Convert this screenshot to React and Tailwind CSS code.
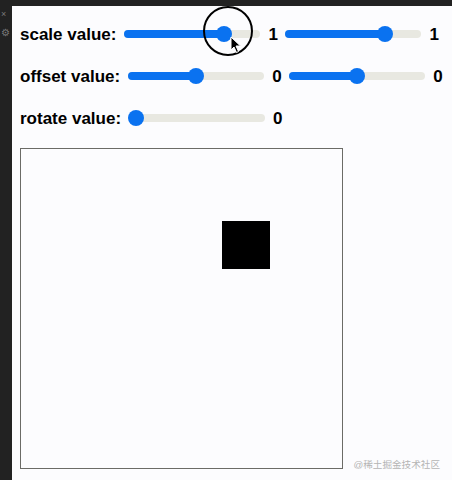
import React from 'react';

const font = { fontFamily: '"Liberation Sans", Arial, sans-serif' };

function Slider({ pct }) {
  return (
    <div className="relative w-[136px] h-[8px] rounded-full bg-[#e8e8e1] shrink-0">
      <div className="h-full rounded-full bg-[#0a72f0]" style={{ width: `${pct}%` }} />
      <div
        className="absolute top-1/2 w-4 h-4 -mt-2 -ml-2 rounded-full bg-[#0a72f0]"
        style={{ left: `${pct}%` }}
      />
    </div>
  );
}

function Row({ label, values }) {
  return (
    <div className="flex items-center h-[42px] gap-2 text-[17px] font-bold text-black">
      <span className="pt-[2px]">{label}</span>
      {values.map((v, i) => (
        <React.Fragment key={i}>
          <Slider pct={v.pct} />
          <span className="w-[9px] pt-[2px]">{v.text}</span>
        </React.Fragment>
      ))}
    </div>
  );
}

export default function App() {
  return (
    <div className="flex w-[452px] h-[480px] bg-[#222222] overflow-hidden" style={font}>
      {/* editor gutter */}
      <aside className="w-[12px] shrink-0 flex flex-col items-start pt-[10px] gap-[9px] pl-[1px] text-[#7a7a7a]">
        <span className="text-[9px] leading-none">×</span>
        <span className="text-[10px] leading-none">⚙</span>
      </aside>

      <main className="relative flex-1 mt-[6px] bg-[#fcfcfe] pl-[8px] pt-[7px]">
        <Row label="scale value:" values={[{ pct: 73, text: '1' }, { pct: 73, text: '1' }]} />
        <Row label="offset value:" values={[{ pct: 50, text: '0' }, { pct: 50, text: '0' }]} />
        <Row label="rotate value:" values={[{ pct: 5, text: '0' }]} />

        <div className="mt-[9px] w-[323px] h-[321px] border border-[#6b6b66] bg-[#fcfcfe]">
          <div className="ml-[201px] mt-[72px] w-[48px] h-[48px] bg-black" />
        </div>

        {/* watermark */}
        <span
          className="absolute right-[12px] bottom-[10px] text-[9.6px] leading-none text-[#b4b4b4]"
          style={{ fontFamily: '"Liberation Sans", "Noto Sans CJK SC", sans-serif' }}
        >
          @稀土掘金技术社区
        </span>

        {/* click highlight + cursor */}
        <div className="absolute left-[191px] top-[0px] w-[50px] h-[50px] rounded-full border-2 border-black" />
        <svg className="absolute left-[218px] top-[30px]" width="12" height="18" viewBox="0 0 12 18">
          <path d="M1 1 L1 14 L4 11 L6.5 16.5 L8.5 15.5 L6 10 L10.5 10 Z" fill="black" stroke="white" strokeWidth="1" />
        </svg>
      </main>
    </div>
  );
}
